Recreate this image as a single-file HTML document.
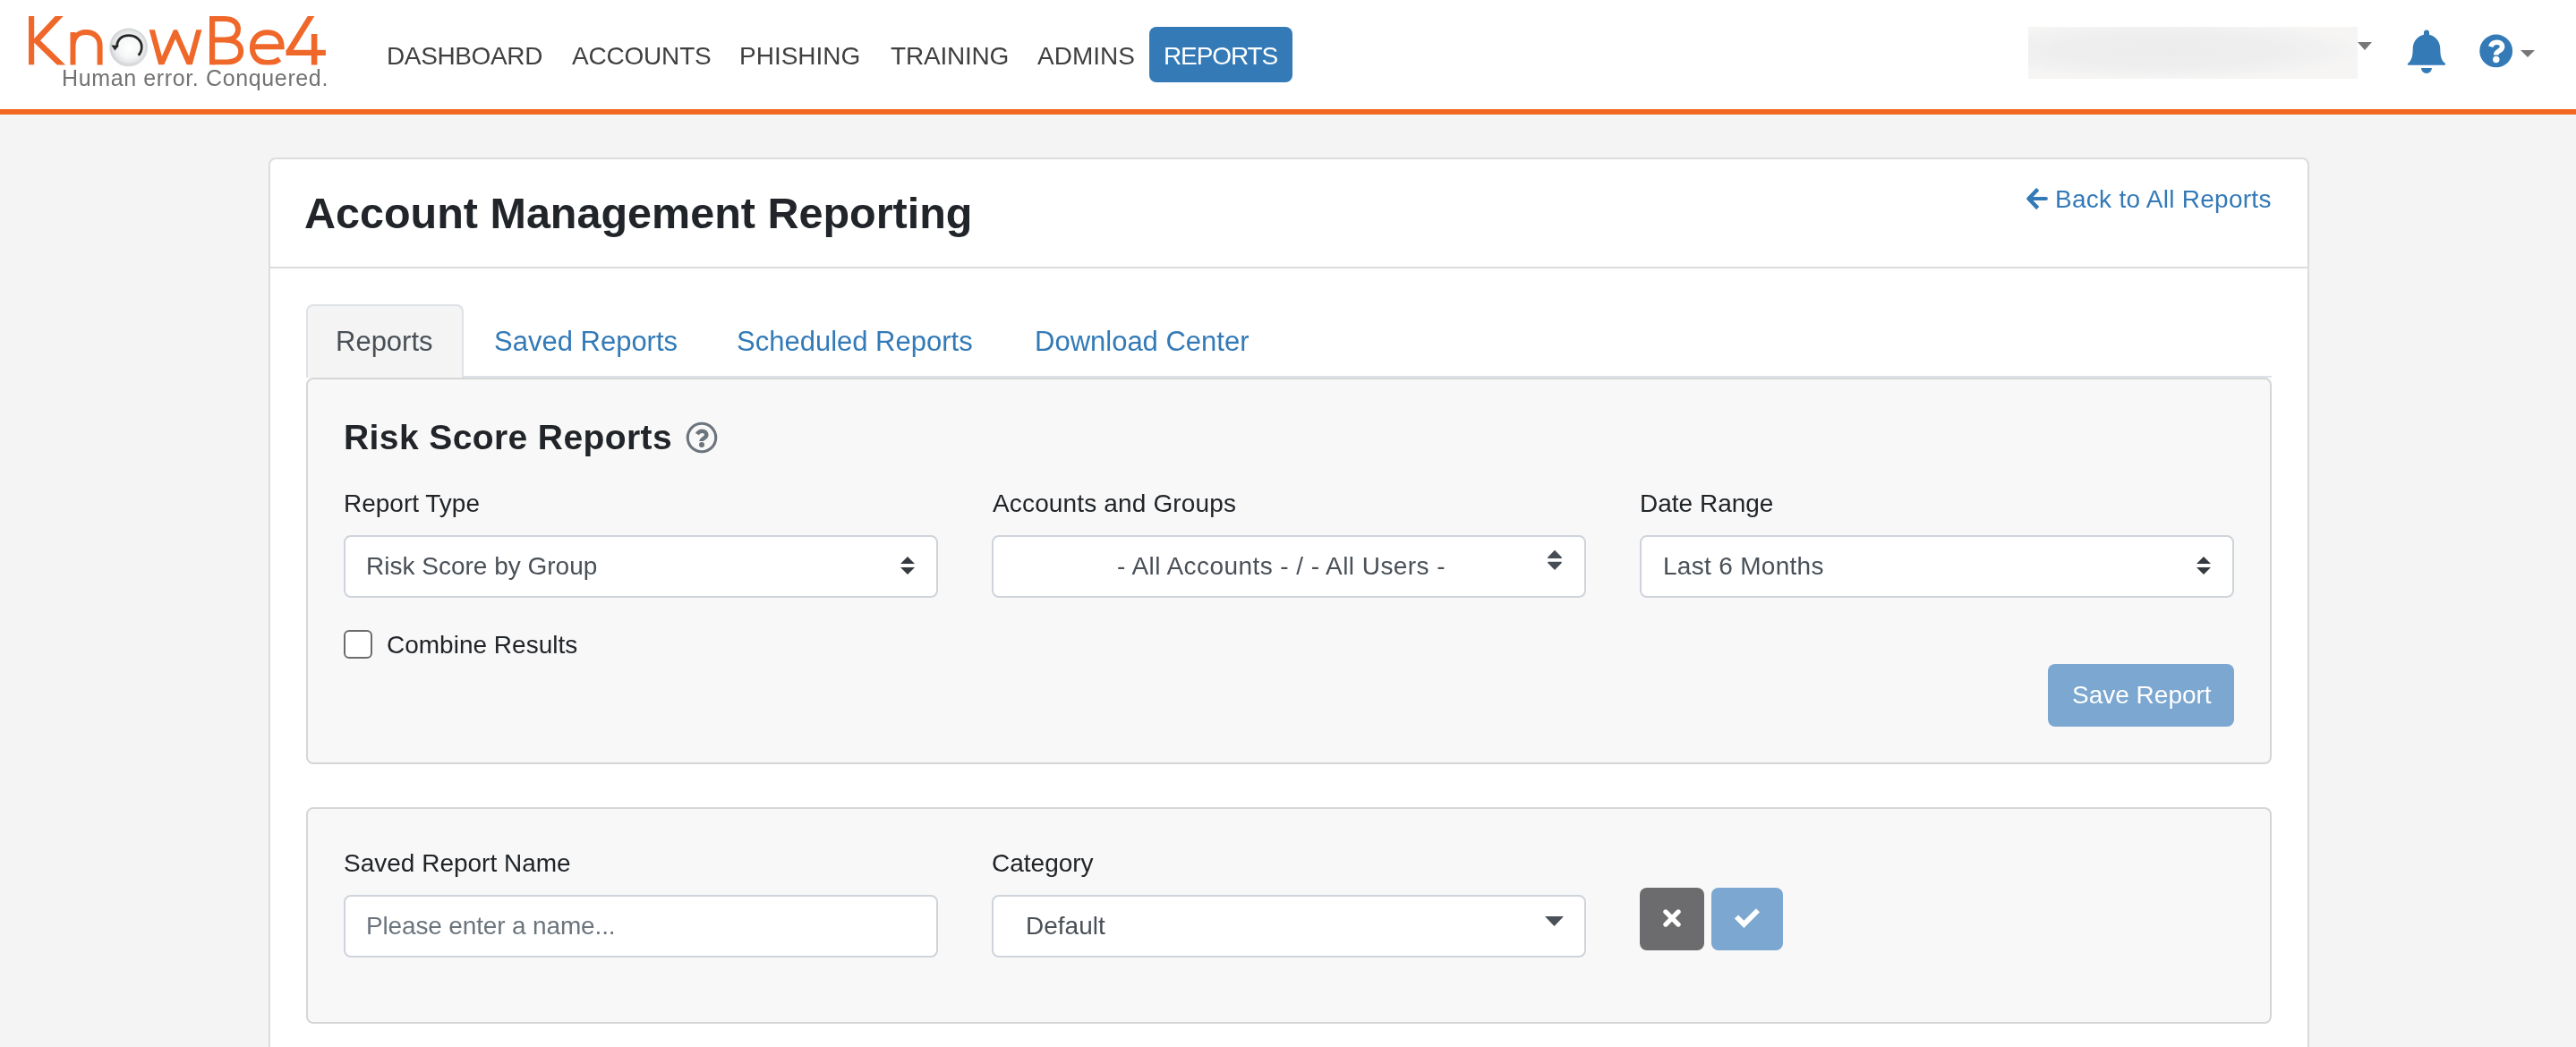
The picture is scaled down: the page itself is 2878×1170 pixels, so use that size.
<!DOCTYPE html>
<html><head><meta charset="utf-8">
<style>
html,body{margin:0;padding:0;}
body{width:2878px;height:1170px;overflow:hidden;background:#f4f4f4;position:relative;font-family:"Liberation Sans",sans-serif;}
.a{position:absolute;}
.t{position:absolute;line-height:1;white-space:nowrap;will-change:transform;}
#hdr{left:0;top:0;width:2878px;height:122px;background:#fff;}
#obar{left:0;top:122px;width:2878px;height:6px;background:#f26722;}
.nav{font-size:28px;color:#3f3f3f;top:49px;}
#card{left:300px;top:176px;width:2276px;height:1100px;background:#fff;border:2px solid #dcdcdc;border-radius:8px;}
#sep{left:302px;top:298px;width:2276px;height:2px;background:#dcdcdc;}
#title{font-size:48.5px;font-weight:bold;color:#212529;}
.lnk{color:#337ab7;}
#tabline{left:342px;top:420px;width:2196px;height:2px;background:#dee2e6;}
#tab1{left:342px;top:340px;width:172px;height:80px;background:#f4f4f4;border:2px solid #dee2e6;border-bottom:none;border-radius:8px 8px 0 0;}
.tab{font-size:31px;}
.panel{left:342px;width:2192px;background:#f8f8f8;border:2px solid #d6d6d6;border-radius:8px;}
.lbl{font-size:28px;color:#212529;}
.sel{background:#fff;border:2px solid #ced4da;border-radius:8px;box-sizing:border-box;height:70px;top:598px;width:664px;}
.stx{font-size:28px;color:#495057;}
</style></head><body>
<div id="hdr" class="a"></div>
<div id="obar" class="a"></div>

<!-- logo -->
<svg class="a" style="left:0;top:0" width="400" height="110" viewBox="0 0 400 110">
<defs>
<clipPath id="cl"><rect x="0" y="18" width="400" height="54.6"/></clipPath>
<clipPath id="clw"><rect x="0" y="33.2" width="400" height="39.4"/></clipPath>
<radialGradient id="og" cx="0.52" cy="0.5" r="0.5"><stop offset="0" stop-color="#ffffff"/><stop offset="0.55" stop-color="#f5f6f6"/><stop offset="0.85" stop-color="#e2e4e6"/><stop offset="1" stop-color="#d3d6d8"/></radialGradient>
</defs>
<g fill="#f0672a" stroke="#f0672a" clip-path="url(#cl)">
<rect x="32" y="18" width="6.2" height="54.6" stroke="none"/>
<polyline points="69,15 40.5,45.3 72,76" fill="none" stroke-width="6.6" stroke-linejoin="miter"/>
<path d="M81.5 75V36 M81.5 52C81.5 41 88 36 96 36C104.5 36 111.6 41 111.6 51V75" fill="none" stroke-width="6"/>
<polyline clip-path="url(#clw)" points="167.8,26 180.2,72 196,36 211.8,72 224.3,26" fill="none" stroke-width="6" stroke-linejoin="miter" stroke-miterlimit="10"/>
<rect x="234" y="18" width="6.2" height="54.6" stroke="none"/>
<path d="M237 21H251C261.5 21 266 26.5 266 32.8C266 39.5 261 44.6 251 44.6H237M251 44.6C263.5 44.6 269.2 50 269.2 57.6C269.2 65.2 263 69.6 251 69.6H237" fill="none" stroke-width="6"/>
<path d="M281.9 52.3H314.6C314.6 42 308.5 36.3 298.6 36.3C288 36.3 281.9 44 281.9 53.2C281.9 63.5 288.5 70.1 299.2 70.1C305 70.1 309 68.6 312.5 66" fill="none" stroke-width="6"/>
<line x1="350" y1="14" x2="322.3" y2="58.5" stroke-width="6.4"/>
<rect x="319.5" y="55.8" width="44.4" height="6.2" stroke="none"/>
<rect x="347.8" y="38" width="6.6" height="35" stroke="none"/>
</g>
<circle cx="143.7" cy="52.9" r="21.4" fill="url(#og)"/>
<circle cx="143.7" cy="52" r="19.6" fill="none" stroke="#c9cdd0" stroke-width="1" opacity="0.55"/>
<path d="M130.6 52.5C130.6 44.5 136 39.7 143.6 39.7C152.5 39.7 158.3 45.5 158.3 52.5C158.3 56.3 157 59.3 154.6 61.8" fill="none" stroke="#262626" stroke-width="2.7" stroke-linecap="butt"/>
<path d="M124.4 50.5L133 50.8L128.4 56.6z" fill="#262626"/>
</svg>
<div class="t" style="left:69px;top:75px;font-size:25px;color:#727272;letter-spacing:0.63px;">Human error. Conquered.</div>
<div class="t nav" style="left:432px;letter-spacing:-0.37px;">DASHBOARD</div>
<div class="t nav" style="left:639px;letter-spacing:-0.2px;">ACCOUNTS</div>
<div class="t nav" style="left:826px;">PHISHING</div>
<div class="t nav" style="left:994.5px;letter-spacing:-0.2px;">TRAINING</div>
<div class="t nav" style="left:1159px;">ADMINS</div>
<div class="a" style="left:1284px;top:30px;width:160px;height:62px;background:#337ab7;border-radius:8px;"></div>
<div class="t nav" style="left:1300px;color:#fff;letter-spacing:-1.1px;">REPORTS</div>

<!-- blurred user box -->
<div class="a" style="left:2266px;top:30px;width:368px;height:58px;background:radial-gradient(ellipse 60% 55% at 42% 45%, #ececec 0%, #eeeeee 55%, #f2f2f2 85%, #f6f5f4 100%);"></div>
<div class="a" style="left:2634px;top:47px;width:0;height:0;border-left:8px solid transparent;border-right:8px solid transparent;border-top:9px solid #777;"></div>
<!-- bell -->
<svg class="a" style="left:2680px;top:25px" width="60" height="62" viewBox="0 0 60 62"><path fill="#337ab7" d="M31 13.5C39.8 13.5 46.3 20.6 46.3 29.5C46.3 37.5 47.8 42.3 50.9 45C53.3 47.2 52.2 47.8 49.4 47.8H12.6C9.8 47.8 8.7 47.2 11.1 45C14.2 42.3 15.7 37.5 15.7 29.5C15.7 20.6 22.2 13.5 31 13.5Z M28 15V11.4A3 3 0 0 1 34 11.4V15Z M25 50.9H37A6 6 0 0 1 25 50.9Z"/></svg>
<!-- help circle -->
<svg class="a" style="left:2770px;top:38px" width="38" height="38" viewBox="0 0 38 38"><circle cx="18.7" cy="18.9" r="18.4" fill="#337ab7"/><path d="M12.6 14.2C13.8 10.6 16.3 9.2 19.6 9.2C23.3 9.2 25.6 11.4 25.6 14C25.6 16.6 23.8 17.8 21.9 19C19.8 20.3 18.7 21.2 18.7 23.4" fill="none" stroke="#fff" stroke-width="5.6"/><circle cx="18.8" cy="28.5" r="3.7" fill="#fff"/></svg>
<div class="a" style="left:2816px;top:56px;width:0;height:0;border-left:8px solid transparent;border-right:8px solid transparent;border-top:8px solid #777;"></div>

<!-- card -->
<div id="card" class="a"></div>
<div id="sep" class="a"></div>
<div id="title" class="t" style="left:340px;top:214px;">Account Management Reporting</div>
<svg class="a" style="left:2264px;top:210px" width="25" height="25" viewBox="0 0 25 25"><path d="M12.7 1.4L2.5 12L12.7 22.6" fill="none" stroke="#337ab7" stroke-width="4.4" stroke-linejoin="round"/><path d="M4 12H21.8" fill="none" stroke="#337ab7" stroke-width="4.2" stroke-linecap="round"/></svg>
<div class="t lnk" style="left:2296px;top:209px;font-size:28px;letter-spacing:0.27px;">Back to All Reports</div>

<!-- tabs -->
<div id="tabline" class="a"></div>
<div id="tab1" class="a"></div>
<div class="t tab" style="left:375px;top:366px;color:#495057;">Reports</div>
<div class="t tab lnk" style="left:552px;top:366px;">Saved Reports</div>
<div class="t tab lnk" style="left:823px;top:366px;">Scheduled Reports</div>
<div class="t tab lnk" style="left:1156px;top:366px;">Download Center</div>

<!-- panel 1 -->
<div class="a panel" style="top:422px;height:428px;"></div>
<div class="t" style="left:384px;top:469px;font-size:39px;font-weight:bold;color:#212529;letter-spacing:0.4px;">Risk Score Reports</div>
<svg class="a" style="left:766px;top:470px" width="38" height="38" viewBox="0 0 38 38"><circle cx="18" cy="19" r="15.75" fill="none" stroke="#6c757d" stroke-width="3.1"/><path d="M12.9 15.2C14.2 12.8 16 11.7 18.4 11.7C21.4 11.7 23.3 13.5 23.3 15.7C23.3 17.9 21.9 18.9 20.3 19.9C18.6 21 17.6 21.8 17.6 23V22.4" fill="none" stroke="#6c757d" stroke-width="4.6"/><circle cx="18" cy="26.9" r="3" fill="#6c757d"/></svg>

<div class="t lbl" style="left:384px;top:549px;">Report Type</div>
<div class="t lbl" style="left:1108.5px;top:549px;letter-spacing:0.15px;">Accounts and Groups</div>
<div class="t lbl" style="left:1832px;top:549px;">Date Range</div>

<div class="a sel" style="left:384px;"></div>
<div class="a sel" style="left:1108px;"></div>
<div class="a sel" style="left:1832px;"></div>
<div class="t stx" style="left:409px;top:619px;">Risk Score by Group</div>
<div class="t stx" style="left:1248px;top:619px;letter-spacing:0.43px;">- All Accounts - / - All Users -</div>
<div class="t stx" style="left:1857.5px;top:619px;letter-spacing:0.3px;">Last 6 Months</div>
<svg class="a" style="left:1006px;top:622px" width="16" height="20" viewBox="0 0 16 20"><path d="M8 0L16 8H0z M0 12H16L8 20z" fill="#343a40"/></svg>
<svg class="a" style="left:1728px;top:614px" width="18" height="24" viewBox="-1 0 18 24"><path d="M8 0.8L15.6 8.4C16.2 9 16 10 15 10H1C0 10-.2 9 .4 8.4Z M1 13.7H15C16 13.7 16.2 14.7 15.6 15.3L8 22.9L.4 15.3C-.2 14.7 0 13.7 1 13.7Z" fill="#474d55"/></svg>
<svg class="a" style="left:2454px;top:622px" width="16" height="20" viewBox="0 0 16 20"><path d="M8 0L16 8H0z M0 12H16L8 20z" fill="#343a40"/></svg>

<div class="a" style="left:384px;top:704px;width:28px;height:28px;border:2px solid #6b6b6b;border-radius:6px;background:#fff;"></div>
<div class="t lbl" style="left:432px;top:707px;">Combine Results</div>

<div class="a" style="left:2288px;top:742px;width:208px;height:70px;background:#7ba7d0;border-radius:8px;"></div>
<div class="t" style="left:2314.5px;top:763px;font-size:28px;color:#fff;">Save Report</div>

<!-- panel 2 -->
<div class="a panel" style="top:902px;height:238px;"></div>
<div class="t lbl" style="left:384px;top:951px;">Saved Report Name</div>
<div class="t lbl" style="left:1108px;top:951px;">Category</div>
<div class="a sel" style="left:384px;top:1000px;"></div>
<div class="a sel" style="left:1108px;top:1000px;"></div>
<div class="t" style="left:409px;top:1021px;font-size:28px;color:#6c757d;letter-spacing:-0.15px;">Please enter a name...</div>
<div class="t stx" style="left:1146px;top:1021px;">Default</div>
<svg class="a" style="left:1726px;top:1024px" width="21" height="11" viewBox="0 0 21 11"><path d="M0 0H21L10.5 11z" fill="#495057"/></svg>
<div class="a" style="left:1832px;top:992px;width:72px;height:70px;background:#6c6c6e;border-radius:8px;"></div>
<svg class="a" style="left:1856px;top:1014px" width="24" height="24" viewBox="0 0 24 24"><path d="M4.95 4.95L19.05 19.05M19.05 4.95L4.95 19.05" stroke="#fff" stroke-width="5.3" stroke-linecap="round"/></svg>
<div class="a" style="left:1912px;top:992px;width:80px;height:70px;background:#7ba7d0;border-radius:8px;"></div>
<svg class="a" style="left:1930px;top:1010.5px" width="40" height="30" viewBox="0 0 40 30"><path d="M10 13.5L18.4 21.9L34 6.3" fill="none" stroke="#fff" stroke-width="5.8" stroke-linejoin="miter"/></svg>
</body></html>
